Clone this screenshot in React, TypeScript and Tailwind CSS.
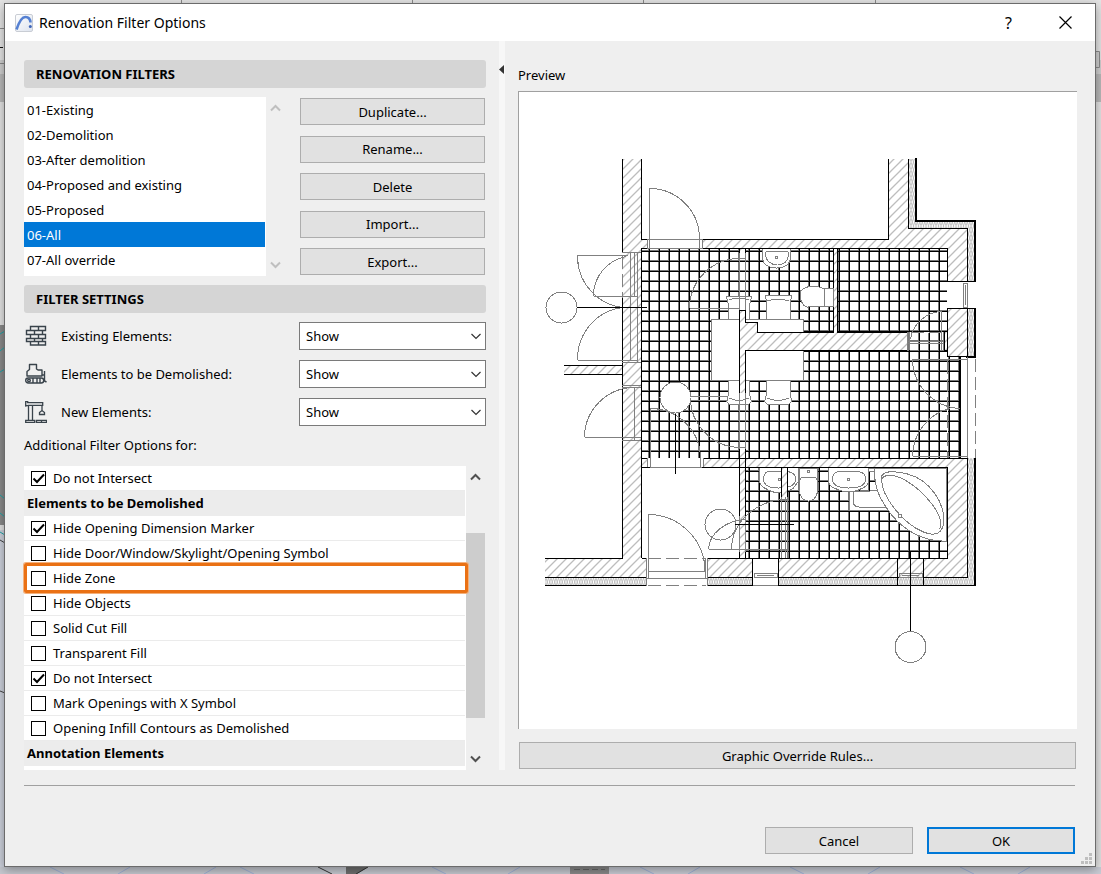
import React, { useState } from "react";

type Option = {
  label: string;
  checked?: boolean;
  heading?: boolean;
  highlighted?: boolean;
};

const FILTERS = [
  "01-Existing",
  "02-Demolition",
  "03-After demolition",
  "04-Proposed and existing",
  "05-Proposed",
  "06-All",
  "07-All override",
];

const ACTIONS = ["Duplicate...", "Rename...", "Delete", "Import...", "Export..."];

const OPTIONS: Option[] = [
  { label: "Do not Intersect", checked: true },
  { label: "Elements to be Demolished", heading: true },
  { label: "Hide Opening Dimension Marker", checked: true },
  { label: "Hide Door/Window/Skylight/Opening Symbol" },
  { label: "Hide Zone", highlighted: true },
  { label: "Hide Objects" },
  { label: "Solid Cut Fill" },
  { label: "Transparent Fill" },
  { label: "Do not Intersect", checked: true },
  { label: "Mark Openings with X Symbol" },
  { label: "Opening Infill Contours as Demolished" },
  { label: "Annotation Elements", heading: true },
];

const BricksIcon = () => (
  <svg width="22" height="22" viewBox="0 0 22 22" fill="none" stroke="#39434b" strokeWidth="1.4">
    <path d="M5.500 1.500h15v4h-15zM13.500 1.500v4M1.500 5.500h16v4h-16zM9.500 5.500v4M5.500 9.500h15v4h-15zM13.500 9.500v4M1.500 13.500h16v3h-16zM9.500 13.500v3M5.500 16.500h15v3.500h-15zM13.500 16.500v3.500" />
  </svg>
);

const BulldozerIcon = () => (
  <svg width="22" height="22" viewBox="0 0 22 22" fill="none" stroke="#39434b" strokeWidth="1.4">
    <path d="M2 13V8.500l2.500-2V1.500h7V6l1.500 1h4v6z" strokeLinejoin="round" />
    <rect x="0.700" y="15" width="18" height="5" rx="2.500" />
    <circle cx="4" cy="17.500" r="1.300" />
    <path d="M8 15v5M12 15v5M15 15v5M17 12h2.500M19.500 8v10l2 1" />
  </svg>
);

const CraneIcon = () => (
  <svg width="22" height="22" viewBox="0 0 22 22" fill="none" stroke="#39434b" strokeWidth="1.300">
    <path d="M.7 .7h2v1h15v2.600H3.500L.7 5zM3.500 4.300v15M7.500 4.300v15M17 4.300v5M14.500 11.500L17 9.500l2.500 2v2h-5z" />
    <path d="M.7 19.300h9v2h-9zM11.500 19.300h10v2h-10zM16.500 19.300v2" />
  </svg>
);

const SETTINGS = [
  { id: "existing", label: "Existing Elements:", icon: <BricksIcon /> },
  { id: "demolished", label: "Elements to be Demolished:", icon: <BulldozerIcon /> },
  { id: "new", label: "New Elements:", icon: <CraneIcon /> },
];

const Arrow = ({ up = false, color = "#505050" }: { up?: boolean; color?: string }) => (
  <svg width="11" height="8" viewBox="0 0 11 8" fill="none" stroke={color} strokeWidth="2">
    <path d={up ? "M1 6.500l4.500-4.500 4.500 4.500" : "M1 1.500L5.500 6 10 1.500"} />
  </svg>
);

const AppIcon = () => (
  <svg width="18" height="18" viewBox="0 0 18 18" fill="none">
    <defs>
      <linearGradient id="appTile" x1="0" y1="0" x2="1" y2="1">
        <stop offset="0" stopColor="#ffffff" />
        <stop offset="1" stopColor="#dde3ee" />
      </linearGradient>
    </defs>
    <rect x=".5" y=".5" width="17" height="17" rx="1.500" fill="url(#appTile)" stroke="#c9cdd4" />
    <path d="M1.500 15.500C4 8 6.500 2.800 10.500 3c3 .2 4.800 2.500 5 5.500" stroke="#5580d2" strokeWidth="2.600" />
    <circle cx="15.300" cy="12.500" r="1.500" fill="#3f66b8" />
  </svg>
);

const Heading = ({ children }: { children: React.ReactNode }) => (
  <h2 className="h-7 shrink-0 rounded-[3px] bg-[#d5d5d5] px-3 font-bold leading-7">{children}</h2>
);

// The model view that shows around the dialog
const Backdrop = () => (
  <svg className="absolute inset-0 h-full w-full" viewBox="0 0 1101 874" preserveAspectRatio="none" fill="none">
    <rect width="1101" height="60" fill="#e4e4e4" />
    <rect y="60" width="1101" height="42" fill="#cfcfcf" />
    <rect y="102" width="1101" height="772" fill="#e3e3e3" />
    <rect y="74" width="1101" height="28" fill="#b9b9b9" />
    <rect y="325" width="5" height="200" fill="#8b8b8b" />
    <rect y="530" width="5" height="344" fill="#cdd1dc" />
    <path d="M181.500 0v4M412.500 0v4M643.500 0v4M875.500 0v4M0 28.500h4M0 63.500h4" stroke="#8a8a8a" />
    <path d="M0 47.500h3" stroke="#111" />
    <path d="M1090 51.500h9.500v16h-9.500" stroke="#8c8c8c" fill="#cfcfcf" />
    <path d="M0 334l5-3M0 351l5-4M0 372l5-3M0 495l5 4M0 513l5 4M0 532l5 3" stroke="#21a3a8" />
    <path d="M0 691l5 2M0 540l5 3" stroke="#444" />
    <rect y="867" width="570" height="7" fill="#c6c9d0" />
    <rect x="570" y="867" width="531" height="7" fill="#c9ccd5" />
    <path
      d="M50 867l14 7M130 867l-12 7M216 867l-12 7M240 867l14 7M432 867l14 7M520 867l-12 7M640 867l14 7M700 867l-12 7M790 867l14 7M880 867l-12 7M960 867l14 7M1030 867l-12 7"
      stroke="#9fb0d8"
    />
    <path d="M346 867h22l-11 7h-11z" fill="#6f6f6f" />
    <path d="M318 867l14 7M368 867l-12 7" stroke="#333" />
    <rect x="570" y="867" width="39" height="7" fill="#8a8a8a" />
    <path d="M574 869.500h31" stroke="#666" strokeDasharray="6 3" />
  </svg>
);

const FloorPlan = () => (
  <svg
    className="min-h-0 w-full flex-1"
    viewBox="519 92 558 637"
    fill="none"
    shapeRendering="crispEdges"
    role="img"
    aria-label="Preview"
  >
    <defs>
      <pattern id="tiles" x="648" y="260" width="10" height="10" patternUnits="userSpaceOnUse">
        <rect width="10" height="10" fill="#fff" />
        <path d="M0 .5h10M.5 0v10" stroke="#777" />
        <path d="M0 1.500h10M1.500 0v10" stroke="#000" />
      </pattern>
      <pattern id="hatch" width="9" height="9" patternUnits="userSpaceOnUse">
        <rect width="9" height="9" fill="#fff" />
        <path d="M-1 10L10 -1M-1 1L1 -1M8 10L10 8" stroke="#bdbdbd" strokeWidth="1.300" shapeRendering="auto" />
      </pattern>
      <pattern id="insulation" x="1" y="2" width="5" height="8" patternUnits="userSpaceOnUse">
        <rect width="5" height="8" fill="#fff" />
        <path d="M0 0L2.500 8 5 0M0 8L2.500 0 5 8" stroke="#b8b8b8" strokeWidth=".8" shapeRendering="auto" />
      </pattern>
    </defs>

    {/* Tiled floors */}
    <path
      fill="url(#tiles)"
      d="M641 248h192v84h-192zM837 248h110v84h-110zM641 332h98v126h-98zM739 350h221v108h-221zM745 467h202v91h-202zM907 332h38v18h-38z"
    />

    {/* Table and chairs */}
    <g fill="#fff" stroke="#808080">
      <path d="M728.500 319.500v-14l-2-9h25l-2 9v14zM766.500 319.500v-17l-1-7h26l-1 7v17z" />
      <path d="M728.500 380.500v14l-2 7 3 3h19l3-3-2-7v-14zM766.500 380.500v14l-2 7 3 3h21l3-3-1-7v-14z" />
      <path d="M711.500 319.500h92v61h-92z" />
    </g>
    <path d="M729 300q10-4 20 0M767 301q11-4 22 0M729 398q10 5 20 0M767 398q11 5 22 0" stroke="#808080" />

    {/* Walls */}
    <path
      fill="url(#hatch)"
      d="M622 159h19v80h247v-80h20v70h59v52h-20v-33h-306v310h306v-91h-306v-9h326v119h-422v-19h77zM564 365h58v9h-58zM947 308h20v49h-20zM833 248h4v84h-4zM739 310h6v12h12v10h150v18h-162v43h-6zM739 449h6v109h-6zM739 248h6v5h-6zM944 332h3v18h-3z"
    />
    <path fill="url(#insulation)" d="M908 159h8v62h59v60h-8v-53h-59zM967 308h8v48h-8zM967 458h8v127h-430v-8h422z" />
    <g stroke="#000">
      <path d="M622.500 159v94M622.500 298v260.500h-77.500M641.500 159v80.500h247v-80.500M641.500 248.500h306v33M641.500 248v310" />
      <path d="M564 365.500h58M564 374.500h58M908.500 159v69.500h59v53M947.500 281.500h28M947.500 308.500h28M947.500 308v48.500h20v-48" />
      <path d="M833.500 248v84.500M837.500 248v84.500M739.500 310.500h6v12h12v10h76M837 332.500h70M907 350.500h-161.500v43M739.500 310v83M944 350.500h3M944.500 332v18" />
      <path d="M641.500 458.500h326.500M641.500 467.500h306v91h-306M739.500 449v109M745.500 449v109M739.500 248v5M745.500 248v5M960.500 357v101" />
      <path d="M545 577.500h422.500v-119M545 585.500h431" />
    </g>
    <path d="M916 158v63h59v61M975 308v49h-9M975 458v127" stroke="#000" strokeWidth="2" />

    {/* Door and window openings */}
    <g fill="#fff">
      <path d="M647 239h56v9h-56zM647 458h56v9h-56zM647 558h60v28h-60zM753 559h25v27h-25zM948 282h27v26h-27zM961 359h15v99h-15z" />
    </g>
    <g stroke="#808080">
      <path d="M647.500 239.500h55v9h-55zM649.500 188v60M699.500 239v9M649.500 188.500A50 50 0 0 1 699.500 239" />
      <path d="M622 252.500h19M630.500 253v108M637.500 253v109M634.500 253v43M577.500 255.500h50M577.500 255v4A50 52 0 0 0 626 307.500M593.500 296.500h44M593.500 296A41 40 0 0 1 626 256.500M622 362.500h19" />
      <path d="M577.500 360.500h60M577.500 360A50 52 0 0 1 626 307.500" />
      <path d="M584.500 437.500h56M584.500 437A50 50 0 0 1 634 387.500M622 385.500h19M622 387.500h19M634.500 387v53M622 440.500h19" />
      <path d="M739.500 253v57M745.500 253v57M689.500 308.500h50M689.500 308A50 50 0 0 1 739.500 258.500h6M739.500 393v56M745.500 393v56M690 396.500h38M690 400.500h38M690.500 396A50 50 0 0 0 740 447.500h6" />
      <path d="M647.500 458v9M650.500 408v59M700.500 458v9M703.500 458v9M650.500 408.500A50 50 0 0 1 700.500 458M647 467.500h56" />
      <path d="M648.500 514v64M648.500 514.500A57 57 0 0 1 705 571.500M646.500 558v28M705.500 558v20M707.500 558v28M648 571.500h57M646 578.500h61" />
      <path d="M708.500 549.500h79M708.500 549A40 31 0 0 1 745 519.500M731.500 549A56 50 0 0 1 787 499.500M739.500 516v36M745.500 516v36" />
      <path d="M941.500 311v39M910.500 339A33 33 0 0 1 941 311.500M907.500 332v18M909.500 332v18M943.500 332v18M907 341.500h37M907 343.500h37" />
      <path d="M912.500 359.500h55M912.500 359A50 50 0 0 0 960 408.500M912.500 456.500h55M912.500 456A48 50 0 0 1 950 408.500M967.500 357v101" />
      <path d="M963.500 283v24h4v-24zM965.500 285v20" />
    </g>
    <path d="M975.500 361v97M947.500 361v97M648 558.500h58M648 585.500h58M911 332.500h32" stroke="#fff" />
    <path
      d="M622.500 256v42M975.500 359v99M947.500 361v97M648 558.500h58M648 585.500h58M911 332.500h32"
      stroke="#808080"
      strokeDasharray="13 5"
    />
    <path d="M752.500 558v28M778.500 558v28M897.500 558v28M923.500 558v28" stroke="#000" />
    <path d="M754 573.500h23v4h-23zM757 575.500h17M753 585.500h25M899 573.500h23v4h-23zM902 575.500h17" stroke="#808080" />

    {/* Sanitary fixtures */}
    <g fill="#fff" stroke="#808080">
      <path d="M762.500 249v10q2 9 14 9t14-9v-10" />
      <path d="M765.500 254q0-3 3-3h17q3 0 3 3c0 7-5 11-11 11s-12-4-12-11z" />
      <circle cx="776.500" cy="257.500" r="1" />
      <path d="M824.500 288.500h9v18h-9z" />
      <path d="M824.500 289q-8-4-17-2t-7 11 7 9 17-1z" />
      <path d="M759.500 468v12q0 6 7 9 13 8 27-1l5-7v-13" />
      <path d="M763.500 479c0-8 5-8 15-8s17 1 17 8-7 9-17 9-15-3-15-9z" />
      <circle cx="779.500" cy="479.500" r="1" />
      <path d="M799.500 468v24q2 9 9 9t9-9v-24z" />
      <path d="M799.500 488v-6q0-5 5-5h8q5 0 5 5v6" fill="none" />
      <circle cx="808.500" cy="471.500" r="1" />
      <path d="M849.500 492v18.500h41l-10-20z" />
      <path d="M853.500 492v10q0 5 6 5h27" />
      <path d="M828.500 468v14q1 5 8 7 12 6 24 0 8-3 8-8v-13" />
      <path d="M832.500 479c0-7 4-8 16-8s17 1 17 8-7 9-17 9-16-2-16-9z" />
      <circle cx="848.500" cy="479.500" r="1" />
      <path d="M868.500 468h6v3h-6z" />
      <path d="M874.500 468c-1 22 8 35 18 48 13 15 30 24 49 25h5v-73z" />
      <path d="M881.500 479c-1-8 11-9 26-5 23 6 38 30 36 49-1 10-8 14-20 9-20-8-42-35-42-53z" />
      <path d="M881.500 479c4-6 15-4 25 2 17 10 40 36 33 48" fill="none" />
      <path d="M898.500 514.500h3v3h-3z" />
      <path d="M781.500 497v61M785.500 497v61M787.500 497v61" />
    </g>
    <path fill="url(#hatch)" d="M782 468h5v29h-5z" />
    <path d="M781.500 467v30M787.500 467v30M641 467.500h306M947.500 467v91" stroke="#000" />
    <path d="M650 467.500h52" stroke="#808080" />

    {/* Dimension markers */}
    <g stroke="#000">
      <path d="M577 307.500h70M675.500 412v62M735 524.500h59M910.500 551v81" />
    </g>
    <g stroke="#808080">
      <circle cx="561.500" cy="307.500" r="15.500" />
      <circle cx="675.500" cy="397.500" r="15.500" fill="#fff" />
      <circle cx="720.500" cy="524.500" r="15.500" />
      <circle cx="910.500" cy="647" r="15.500" />
    </g>
  </svg>
);

const pushButton = "h-[27px] border border-[#adadad] bg-[#e1e1e1] leading-5 hover:bg-[#e5f1fb]";

export default function App() {
  const [selected, setSelected] = useState("06-All");

  return (
    <div className="relative flex min-h-screen flex-col pt-[3px] pr-[5px] pb-[7px] pl-[4px] font-['Noto_Sans','Open_Sans',sans-serif] text-[13px] leading-5 text-black">
      <Backdrop />

      <main className="relative flex flex-1 flex-col border border-[#6b6b6b] bg-[#efefef] shadow-[0_3px_10px_rgba(0,0,0,0.35)]">
        <header className="flex h-[37px] shrink-0 items-center bg-white pr-px pl-[10px]">
          <AppIcon />
          <h1 className="ml-[6px] flex-1 text-[14px]">Renovation Filter Options</h1>
          <button aria-label="Help" className="flex h-full w-[57px] items-center justify-center text-[16px]">
            ?
          </button>
          <button aria-label="Close" className="flex h-full w-[57px] items-center justify-center">
            <svg width="13" height="13" viewBox="0 0 13 13" stroke="#000" strokeWidth="1.200">
              <path d="M.5 .5l12 12M12.500 .5l-12 12" />
            </svg>
          </button>
        </header>

        <div className="flex flex-1 pr-[18px] pl-[19px]">
          <section className="flex w-[462px] shrink-0 flex-col pt-[19px]">
            <Heading>RENOVATION FILTERS</Heading>

            <div className="mt-[9px] flex h-[179px]">
              <ul className="w-[242px] bg-white pr-px">
                {FILTERS.map((name) => (
                  <li key={name}>
                    <button
                      onClick={() => setSelected(name)}
                      className={`block h-[25px] w-full px-[3px] text-left ${
                        name === selected ? "bg-[#0078d7] text-white" : ""
                      }`}
                    >
                      {name}
                    </button>
                  </li>
                ))}
              </ul>
              <div className="flex w-[19px] flex-col items-center justify-between py-[7px]">
                <Arrow up color="#bfbfbf" />
                <Arrow color="#bfbfbf" />
              </div>
              <div className="ml-[15px] flex w-[185px] flex-col justify-between py-px">
                {ACTIONS.map((action) => (
                  <button key={action} className={pushButton}>
                    {action}
                  </button>
                ))}
              </div>
            </div>

            <div className="mt-[9px]">
              <Heading>FILTER SETTINGS</Heading>
            </div>

            <div className="mt-[9px] flex flex-col gap-[10px]">
              {SETTINGS.map((s) => (
                <div key={s.id} className="flex h-7 items-center">
                  <span className="ml-px w-9">{s.icon}</span>
                  <label htmlFor={s.id} className="flex-1">
                    {s.label}
                  </label>
                  <div className="relative w-[187px]">
                    <select
                      id={s.id}
                      className="block h-7 w-full appearance-none border border-[#7a7a7a] bg-white px-[6px] leading-5"
                    >
                      <option>Show</option>
                      <option>Hide</option>
                      <option>Override</option>
                    </select>
                    <svg
                      className="pointer-events-none absolute top-[11px] right-[5px]"
                      width="10"
                      height="7"
                      viewBox="0 0 10 7"
                      fill="none"
                      stroke="#333"
                      strokeWidth="1.200"
                    >
                      <path d="M.5 1L5 5.500 9.500 1" />
                    </svg>
                  </div>
                </div>
              ))}
            </div>

            <h3 className="mt-[9px] mb-[11px]">Additional Filter Options for:</h3>

            <div className="flex flex-1">
              <ul className="w-[442px] bg-white">
                {OPTIONS.map((o, i) =>
                  o.heading ? (
                    <li key={i} className="mr-px h-[25px] bg-[#ececec] px-[3px] leading-[25px] font-bold">
                      {o.label}
                    </li>
                  ) : (
                    <li key={i} className="relative mr-px h-[25px] border-b border-[#ebebeb]">
                      <label className="flex h-full items-center gap-[7px] pl-[7px]">
                        <span className="relative h-[15px] w-[15px]">
                          <input
                            type="checkbox"
                            defaultChecked={o.checked}
                            className="peer block h-[15px] w-[15px] appearance-none border border-black bg-white"
                          />
                          <svg
                            className="pointer-events-none absolute inset-0 hidden peer-checked:block"
                            width="15"
                            height="15"
                            viewBox="0 0 15 15"
                            fill="none"
                            stroke="#000"
                            strokeWidth="2"
                          >
                            <path d="M2.500 7.500L6 11l7-7.500" />
                          </svg>
                        </span>
                        {o.label}
                      </label>
                      {o.highlighted && (
                        <span className="pointer-events-none absolute -top-[3px] -right-[3px] -bottom-[3px] left-0 z-10 rounded-[2px] border-[3px] border-[#ea7114] ring-1 ring-[#f3b07c]" />
                      )}
                    </li>
                  )
                )}
              </ul>
              <div className="flex w-[19px] flex-col items-center py-[7px]">
                <Arrow up />
                <div className="mt-[52px] h-[185px] w-full bg-[#cdcdcd]" />
                <div className="flex-1" />
                <Arrow />
              </div>
            </div>
          </section>

          <div className="relative ml-[13px] w-[6px] shrink-0 bg-[#f7f7f7]">
            <svg className="absolute top-6 left-0" width="5" height="9" viewBox="0 0 5 9">
              <path d="M5 0v9L0 4.500z" fill="#333" />
            </svg>
          </div>

          <section className="ml-[13px] flex min-w-0 flex-1 flex-col pt-6">
            <h2 className="mb-[6px]">Preview</h2>
            <div className="flex flex-1 flex-col border-t border-l border-[#a0a0a0] bg-white">
              <FloorPlan />
            </div>
            <button className={`mt-[13px] mr-px mb-px ml-px ${pushButton}`}>Graphic Override Rules...</button>
          </section>
        </div>

        <footer className="mt-[15px] mr-[20px] ml-[19px] flex justify-end gap-[14px] border-t border-[#a0a0a0] pt-[41px] pb-[12px]">
          <button className={`w-[148px] ${pushButton}`}>Cancel</button>
          <button className="h-[27px] w-[148px] border-2 border-[#0078d7] bg-[#e1e1e1] leading-5">OK</button>
        </footer>

        {/* Resize grip */}
        <svg className="absolute right-[3px] bottom-[2px]" width="11" height="11" viewBox="0 0 11 11" fill="#bfbfbf">
          <path d="M8 0h3v3h-3zM4 4h3v3h-3zM8 4h3v3h-3zM0 8h3v3h-3zM4 8h3v3h-3zM8 8h3v3h-3z" />
        </svg>
      </main>
    </div>
  );
}
